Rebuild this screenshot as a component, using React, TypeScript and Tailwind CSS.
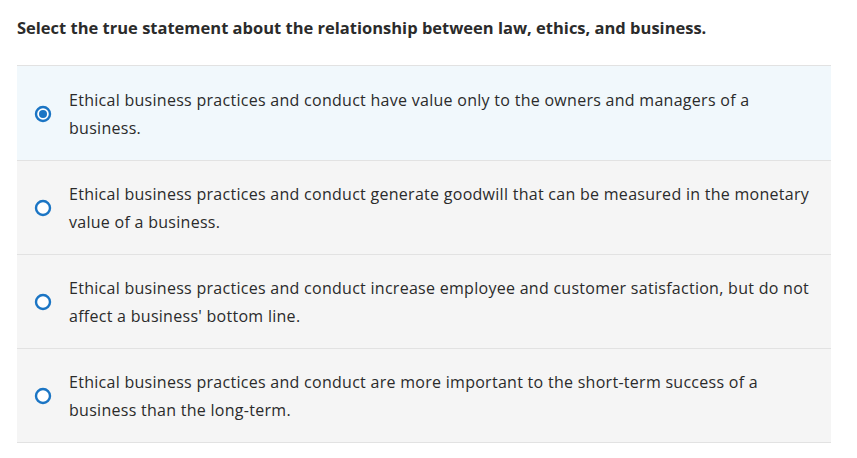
import React from 'react';

const options = [
  'Ethical business practices and conduct have value only to the owners and managers of a business.',
  'Ethical business practices and conduct generate goodwill that can be measured in the monetary value of a business.',
  "Ethical business practices and conduct increase employee and customer satisfaction, but do not affect a business' bottom line.",
  'Ethical business practices and conduct are more important to the short-term success of a business than the long-term.',
];

function Radio({ checked }: { checked: boolean }) {
  return (
    <svg width="18" height="18" viewBox="0 0 18 18" className="shrink-0">
      <circle cx="9" cy="9" r="7" fill="white" stroke="#1b75c4" strokeWidth="2.4" />
      {checked && <circle cx="9" cy="9" r="4" fill="#1b75c4" />}
    </svg>
  );
}

export default function App() {
  const selected = 0;
  return (
    <div className="w-[857px] h-[458px] bg-white px-[17px] pt-[16px] font-['Open_Sans',sans-serif] text-[#2b2b2b]">
      <h1 className="text-[16.5px] leading-[24px] font-bold">
        Select the true statement about the relationship between law, ethics, and business.
      </h1>
      <div className="mt-[25px] w-[814px] border-t border-[#e2e2e2]">
        {options.map((text, i) => (
          <div
            key={i}
            className={`flex items-center border-b border-[#e2e2e2] pl-[17px] ${
              i === 0 ? 'h-[95px] pt-[1px]' : 'h-[94px]'
            } ${i === selected ? 'bg-[#f1f8fc]' : 'bg-[#f5f5f5]'}`}
          >
            <Radio checked={i === selected} />
            <p className="ml-[17px] w-[744px] text-[16px] leading-[28px] tracking-[0.28px]">{text}</p>
          </div>
        ))}
      </div>
    </div>
  );
}
